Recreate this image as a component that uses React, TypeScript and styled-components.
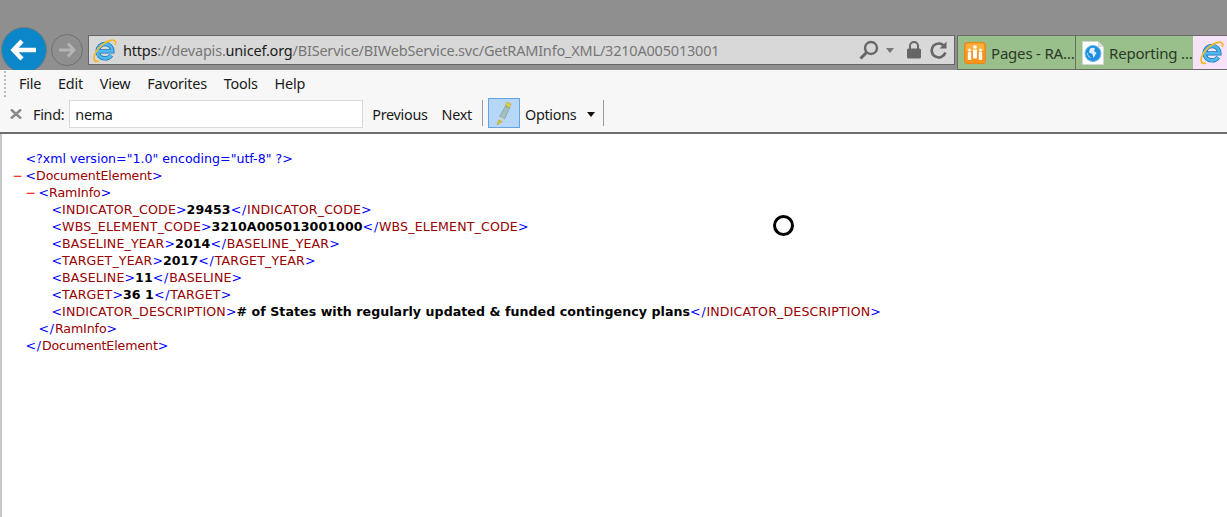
import styled, { createGlobalStyle } from 'styled-components';

const GlobalStyle = createGlobalStyle`
  html, body {
    margin: 0;
    padding: 0;
    height: 100%;
    overflow: hidden;
    background: #fff;
  }
  #root {
    height: 100%;
  }
`;

const uiFont = `'Noto Sans', 'Liberation Sans', sans-serif`;

const Window = styled.div`
  width: 1227px;
  height: 517px;
  display: flex;
  flex-direction: column;
  font-family: ${uiFont};
  overflow: hidden;
`;

const TitleBar = styled.div`
  height: 70px;
  flex: none;
  box-sizing: border-box;
  background: #8f8f8f;
  display: flex;
  align-items: flex-end;
  overflow: hidden;
`;

const BackButton = styled.div`
  width: 46px;
  height: 46px;
  flex: none;
  margin: 0 0 -3px 1px;
  border-radius: 50%;
  border: 1px solid #6f7b82;
  box-sizing: border-box;
  background: #0a86c9;
  display: flex;
  align-items: center;
  justify-content: center;
`;

const ForwardButton = styled.div`
  width: 32px;
  height: 32px;
  flex: none;
  margin: 0 5px 4px 4px;
  border-radius: 50%;
  border: 1px solid #707070;
  box-sizing: border-box;
  display: flex;
  align-items: center;
  justify-content: center;
`;

const AddressBar = styled.div`
  width: 867px;
  height: 30px;
  flex: none;
  margin-bottom: 5px;
  box-sizing: border-box;
  border: 1px solid #666;
  background: #d8d8d8;
  display: flex;
  align-items: center;
  padding: 0 6px 0 3px;
`;

const Url = styled.div`
  flex: 1;
  margin-left: 6px;
  font-size: 14.5px;
  letter-spacing: -0.2px;
  color: #767676;
  white-space: nowrap;
`;

const UrlStrong = styled.span`
  color: #1c1c1c;
`;

const AddressIcons = styled.div`
  display: flex;
  align-items: center;
  color: #666;
`;

const SmallCaret = styled.div<{ $color: string; $left: number; $right: number }>`
  width: 0;
  height: 0;
  margin: 0 ${(p) => p.$right}px 0 ${(p) => p.$left}px;
  border-left: 4.5px solid transparent;
  border-right: 4.5px solid transparent;
  border-top: 5px solid ${(p) => p.$color};
`;

const Tabs = styled.div`
  display: flex;
  height: 35px;
  margin-left: 2px;
  flex: 1;
  min-width: 0;
`;

const Tab = styled.div<{ $active?: boolean; $width: number }>`
  width: ${(p) => p.$width}px;
  flex: none;
  box-sizing: border-box;
  border: 1px solid #6b6b6b;
  border-width: 1px 0 1px ${(p) => (p.$active ? 0 : 1)}px;
  background: ${(p) => (p.$active ? '#f6e3f8' : '#99bf8b')};
  display: flex;
  align-items: center;
  padding-left: 6px;
  gap: 5px;
`;

const TabLabel = styled.span`
  font-size: 15px;
  letter-spacing: -0.2px;
  color: #2b3a28;
  white-space: nowrap;
`;

const CommandArea = styled.div`
  height: 64px;
  flex: none;
  box-sizing: border-box;
  background: #f7f7f7;
  border-bottom: 2px solid #6e6e6e;
  display: flex;
  flex-direction: column;
  position: relative;
`;

const Grip = styled.div`
  position: absolute;
  left: 4px;
  top: 1px;
  height: 26px;
  border-left: 2px dotted #b9b9b9;
`;

const MenuBar = styled.div`
  height: 27px;
  flex: none;
  display: flex;
  align-items: center;
  gap: 16.8px;
  padding-left: 19px;
  letter-spacing: -0.2px;
`;

const MenuItem = styled.span`
  font-size: 14.4px;
  color: #1a1a1a;
`;

const FindBar = styled.div`
  height: 34px;
  flex: none;
  display: flex;
  align-items: center;
  font-size: 14.4px;
  letter-spacing: -0.3px;
  color: #1a1a1a;
`;

const CloseFind = styled.div`
  margin-left: 10px;
  width: 23px;
  display: flex;
  color: #8a8a8a;
`;

const FindInput = styled.div`
  width: 294px;
  height: 28px;
  margin: 0 9px 0 5px;
  box-sizing: border-box;
  border: 1px solid #d9d9d9;
  background: #fff;
  padding-left: 5px;
  line-height: 27px;
`;

const FindLink = styled.span<{ $right: number }>`
  margin-right: ${(p) => p.$right}px;
`;

const Separator = styled.div`
  width: 1px;
  height: 26px;
  margin-top: -2px;
  background: #9a9a9a;
`;

const HighlightButton = styled.div`
  width: 32px;
  height: 30px;
  margin: -2px 5px 0;
  box-sizing: border-box;
  border: 1px solid #62a3e4;
  background: #b6d7f7;
  display: flex;
  align-items: center;
  justify-content: center;
`;

const XmlPane = styled.div`
  flex: 1;
  position: relative;
  box-sizing: border-box;
  background: #fff;
  border-left: 2px solid #c8c8c8;
  padding-top: 16px;
  font-family: 'DejaVu Sans', Verdana, sans-serif;
  font-size: 12.6px;
  line-height: 17px;
`;

const XmlLine = styled.div<{ $level: number }>`
  display: flex;
  white-space: pre;
  padding-left: ${(p) => 10.5 + p.$level * 13}px;
  color: #0000ff;
`;

const Toggle = styled.span`
  width: 13px;
  flex: none;
  color: #ff0000;
`;

const CloseMark = styled.span`
  letter-spacing: 0.8px;
`;

const Tag = styled.span<{ $caps?: boolean }>`
  color: #990000;
  letter-spacing: ${(p) => (p.$caps ? 0.14 : -0.1)}px;
`;

const Value = styled.span`
  color: #000;
  font-weight: 700;
  letter-spacing: 0.06px;
`;

const CursorRing = styled.div`
  position: absolute;
  left: 771px;
  top: 81px;
  width: 21px;
  height: 21px;
  box-sizing: border-box;
  border: 3px solid #000;
  border-radius: 50%;
`;

const IeLogo = ({ size }: { size: number }) => {
  const e =
    'M6 12.8h13.5C19.5 8.5 16.5 5.8 12.5 5.8S5.5 8.8 5.5 12.8 8.5 19.6 12.5 19.6C15 19.6 17 18.6 18.5 16.5';
  return (
    <svg width={size} height={size} viewBox="0 0 24 24" fill="none">
      <path d={e} stroke="#1673b5" strokeWidth="4.2" />
      <path d={e} stroke="#4db8ee" strokeWidth="2.8" />
      <path
        d="M6 22.3C1.5 23.3 1 19 3.5 14 6.5 8 13 3.5 18 2.3 21.5 1.5 23.5 3 22.5 6"
        stroke="#f3b92d"
        strokeWidth="1.7"
        strokeLinecap="round"
      />
    </svg>
  );
};

const PagesIcon = () => (
  <svg width="22" height="22" viewBox="0 0 22 22">
    <rect x="0.5" y="0.5" width="21" height="21" rx="2.5" fill="#f7941e" stroke="#e8871a" />
    <rect x="2" y="1.5" width="18" height="8" rx="2" fill="#fbb040" />
    <g fill="#fff">
      <circle cx="11" cy="5" r="1.8" />
      <rect x="9" y="7.5" width="4" height="9" rx="0.8" />
      <circle cx="5.5" cy="8" r="1.5" />
      <rect x="3.8" y="10" width="3.4" height="8" rx="0.8" />
      <circle cx="16.5" cy="8" r="1.5" />
      <rect x="14.8" y="10" width="3.4" height="8" rx="0.8" />
    </g>
  </svg>
);

const UnicefDocIcon = () => (
  <svg width="22" height="24" viewBox="0 0 22 24">
    <path d="M0.5 0.5h16l5 5v18h-21z" fill="#fff" stroke="#d5d5d5" />
    <path d="M16.5 0.5v5h5z" fill="#e4e4e4" stroke="#bdbdbd" strokeWidth="0.5" />
    <circle cx="11" cy="12.5" r="8" fill="#1f8fe0" stroke="#6db8ee" />
    <path d="M8 7.5c2-1 4-1 5 0l-1 2.5 2.5 2-3 5-1-4-3.500-1.500z" fill="#dff0fc" />
    <path d="M5.5 12c0 2 1 4 3 5" stroke="#dff0fc" strokeWidth="0.8" fill="none" />
  </svg>
);

const HighlighterIcon = () => (
  <svg width="20" height="28" viewBox="0 0 20 28">
    <path d="M13 3l4 2-1.5 4-4-2z" fill="#e2cf3f" stroke="#a99a25" strokeWidth="0.5" />
    <path d="M11.5 7l4 2-5 11-5-2.5z" fill="#9fc0bc" stroke="#6b8f8b" strokeWidth="0.5" />
    <path d="M5.5 17.5l5 2.5-2 2-3.5-.5z" fill="#c9d6d3" />
    <path d="M4.8 21l3.5 1.5L3 26z" fill="#d9c62c" stroke="#a99a25" strokeWidth="0.5" />
  </svg>
);

const xmlLeaves: [string, string][] = [
  ['INDICATOR_CODE', '29453'],
  ['WBS_ELEMENT_CODE', '3210A005013001000'],
  ['BASELINE_YEAR', '2014'],
  ['TARGET_YEAR', '2017'],
  ['BASELINE', '11'],
  ['TARGET', '36 1'],
  ['INDICATOR_DESCRIPTION', '# of States with regularly updated & funded contingency plans'],
];

const App = () => {
  return (
    <Window>
      <GlobalStyle />
      <TitleBar>
        <BackButton>
          <svg width="28" height="24" viewBox="0 0 28 24" fill="none">
            <path d="M12 3L3.5 12l8.5 9M4 12h22" stroke="#fff" strokeWidth="4.5" />
          </svg>
        </BackButton>
        <ForwardButton>
          <svg width="20" height="16" viewBox="0 0 20 16" fill="none">
            <path d="M11 1.5L17 8l-6 6.5M17 8H2" stroke="#b4b4b4" strokeWidth="2.8" />
          </svg>
        </ForwardButton>
        <AddressBar>
          <IeLogo size={25} />
          <Url>
            <UrlStrong>https</UrlStrong>://devapis.<UrlStrong>unicef.org</UrlStrong>/BIService/BIWebService.svc/GetRAMInfo_XML/3210A005013001
          </Url>
          <AddressIcons>
            <svg width="20" height="20" viewBox="0 0 20 20" fill="none">
              <circle cx="12" cy="8" r="6" stroke="currentColor" strokeWidth="2.4" />
              <path d="M7.5 12.5L1.5 18.5" stroke="currentColor" strokeWidth="3" />
            </svg>
            <SmallCaret $color="#777" $left={7} $right={12} />
            <svg width="16" height="20" viewBox="0 0 16 20" fill="none">
              <path d="M4 9V6a4 4 0 018 0v3" stroke="currentColor" strokeWidth="2" />
              <rect x="1" y="8.5" width="14" height="10" rx="1.5" fill="currentColor" />
            </svg>
            <svg width="18" height="20" viewBox="0 0 18 20" fill="none" style={{ marginLeft: 8 }}>
              <path d="M14.5 6.5a7 7 0 10.9 6" stroke="currentColor" strokeWidth="2.6" />
              <path d="M16.5 1.5v7h-7z" fill="currentColor" />
            </svg>
          </AddressIcons>
        </AddressBar>
        <Tabs>
          <Tab $width={118}>
            <PagesIcon />
            <TabLabel>Pages - RA…</TabLabel>
          </Tab>
          <Tab $width={118}>
            <UnicefDocIcon />
            <TabLabel>Reporting …</TabLabel>
          </Tab>
          <Tab $active $width={40}>
            <IeLogo size={25} />
          </Tab>
        </Tabs>
      </TitleBar>
      <CommandArea>
        <Grip />
        <MenuBar>
          <MenuItem>File</MenuItem>
          <MenuItem>Edit</MenuItem>
          <MenuItem>View</MenuItem>
          <MenuItem>Favorites</MenuItem>
          <MenuItem>Tools</MenuItem>
          <MenuItem>Help</MenuItem>
        </MenuBar>
        <FindBar>
          <CloseFind>
            <svg width="12" height="10" viewBox="0 0 12 10" fill="none">
              <path d="M1 0.5l10 9M11 0.5l-10 9" stroke="currentColor" strokeWidth="2.6" />
            </svg>
          </CloseFind>
          <span>Find:</span>
          <FindInput>nema</FindInput>
          <FindLink $right={14}>Previous</FindLink>
          <FindLink $right={10}>Next</FindLink>
          <Separator />
          <HighlightButton>
            <HighlighterIcon />
          </HighlightButton>
          <span>Options</span>
          <SmallCaret $color="#111" $left={11} $right={8} />
          <Separator />
        </FindBar>
      </CommandArea>
      <XmlPane>
        <XmlLine $level={1}>
          {'<?xml version="1.0" encoding="utf-8" ?>'}
        </XmlLine>
        <XmlLine $level={0}>
          <Toggle>−</Toggle>
          {'<'}
          <Tag>DocumentElement</Tag>
          {'>'}
        </XmlLine>
        <XmlLine $level={1}>
          <Toggle>−</Toggle>
          {'<'}
          <Tag>RamInfo</Tag>
          {'>'}
        </XmlLine>
        {xmlLeaves.map(([tag, value]) => (
          <XmlLine $level={3} key={tag}>
            {'<'}
            <Tag $caps>{tag}</Tag>
            {'>'}
            <Value>{value}</Value>
            <CloseMark>{'</'}</CloseMark>
            <Tag $caps>{tag}</Tag>
            {'>'}
          </XmlLine>
        ))}
        <XmlLine $level={2}>
          <CloseMark>{'</'}</CloseMark>
          <Tag>RamInfo</Tag>
          {'>'}
        </XmlLine>
        <XmlLine $level={1}>
          <CloseMark>{'</'}</CloseMark>
          <Tag>DocumentElement</Tag>
          {'>'}
        </XmlLine>
        <CursorRing />
      </XmlPane>
    </Window>
  );
};

export default App;
